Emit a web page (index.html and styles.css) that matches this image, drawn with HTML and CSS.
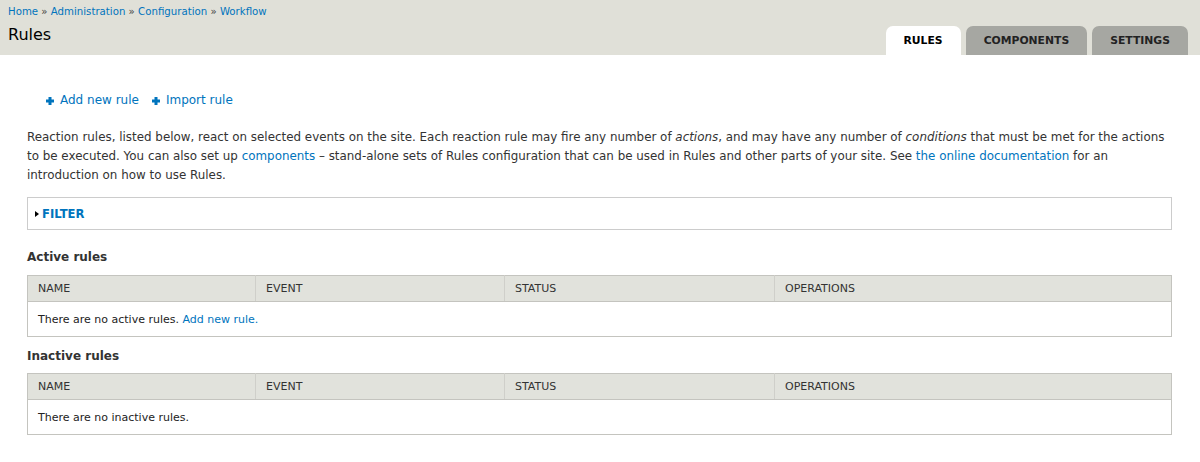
FILE: index.html
```html
<!DOCTYPE html>
<html>
<head>
    <title>Rules</title>
    <link rel="stylesheet" href="styles.css">
</head>
<body>
    <div class="header">
        <div class="header-left">
            <div class="breadcrumb">
                <a href="#">Home</a> &raquo; <a href="#">Administration</a> &raquo; <a href="#">Configuration</a> &raquo; <a href="#">Workflow</a>
            </div>
            <h1 class="page-title">Rules</h1>
        </div>
        <ul class="tabs">
            <li class="active"><a href="#">Rules</a></li>
            <li><a href="#">Components</a></li>
            <li><a href="#">Settings</a></li>
        </ul>
    </div>

    <div class="content">
        <ul class="action-links">
            <li>
                <svg class="plus" width="8" height="8" viewBox="0 0 8 8"><rect x="2.5" y="0" width="3" height="8" fill="#0074bd"/><rect x="0" y="2.5" width="8" height="3" fill="#0074bd"/></svg>
                <a href="#">Add new rule</a>
            </li>
            <li>
                <svg class="plus" width="8" height="8" viewBox="0 0 8 8"><rect x="2.5" y="0" width="3" height="8" fill="#0074bd"/><rect x="0" y="2.5" width="8" height="3" fill="#0074bd"/></svg>
                <a href="#">Import rule</a>
            </li>
        </ul>

        <p class="intro">Reaction rules, listed below, react on selected events on the site. Each reaction rule may fire any number of <em>actions</em>, and may have any number of <em>conditions</em> that must be met for the actions to be executed. You can also set up <a href="#">components</a> &ndash; stand-alone sets of Rules configuration that can be used in Rules and other parts of your site. See <a href="#">the online documentation</a> for an introduction on how to use Rules.</p>

        <div class="filter">
            <span class="arrow"></span>
            <a href="#">Filter</a>
        </div>

        <h2>Active rules</h2>
        <table class="rules-table">
            <thead>
                <tr>
                    <th class="col-name">Name</th>
                    <th class="col-event">Event</th>
                    <th class="col-status">Status</th>
                    <th class="col-ops">Operations</th>
                </tr>
            </thead>
            <tbody>
                <tr>
                    <td colspan="4">There are no active rules. <a href="#">Add new rule.</a></td>
                </tr>
            </tbody>
        </table>

        <h2 class="second">Inactive rules</h2>
        <table class="rules-table">
            <thead>
                <tr>
                    <th class="col-name">Name</th>
                    <th class="col-event">Event</th>
                    <th class="col-status">Status</th>
                    <th class="col-ops">Operations</th>
                </tr>
            </thead>
            <tbody>
                <tr>
                    <td colspan="4">There are no inactive rules.</td>
                </tr>
            </tbody>
        </table>
    </div>
</body>
</html>
```

FILE: styles.css
```css
body {
    margin: 0;
    background: #fff;
    color: #333;
    font-family: "DejaVu Sans", Verdana, sans-serif;
    font-size: 12px;
}

a {
    color: #0074bd;
    text-decoration: none;
}

/* header band */
.header {
    background: #e0e0d8;
    height: 55px;
    display: flex;
    justify-content: space-between;
    padding: 0 12px 0 8px;
}

.breadcrumb {
    font-size: 10.2px;
    line-height: 13px;
    padding-top: 5px;
    color: #444;
}

.page-title {
    margin: 7px 0 0;
    font-size: 16px;
    font-weight: normal;
    line-height: 20px;
    color: #000;
}

.tabs {
    list-style: none;
    margin: 0;
    padding: 0;
    display: flex;
    gap: 5px;
    align-self: flex-end;
}

.tabs a {
    display: block;
    height: 29px;
    line-height: 30px;
    padding: 0 18px;
    background: #a6a7a2;
    border-radius: 7px 7px 0 0;
    color: #222;
    font-size: 10.8px;
    font-weight: bold;
    text-transform: uppercase;
}

.tabs .active a {
    background: #fff;
    color: #000;
}

/* content */
.content {
    padding: 0 28px 0 27px;
}

.action-links {
    list-style: none;
    margin: 36px 0 18px;
    padding-left: 19px;
    display: flex;
    gap: 13px;
    line-height: 19px;
}

.action-links li {
    display: flex;
    align-items: center;
    gap: 6px;
}

.intro {
    margin: 0 0 12px;
    font-size: 11.9px;
    line-height: 19px;
}

.filter {
    border: 1px solid #ccc;
    height: 31px;
    display: flex;
    align-items: center;
    padding-left: 7px;
    gap: 3px;
}

.filter .arrow {
    width: 0;
    height: 0;
    border-top: 3px solid transparent;
    border-bottom: 3px solid transparent;
    border-left: 4px solid #000;
}

.filter a {
    font-size: 11.6px;
    font-weight: bold;
    text-transform: uppercase;
}

h2 {
    margin: 18px 0 8px;
    font-size: 12px;
    font-weight: bold;
    line-height: 19px;
}

h2.second {
    margin-top: 10px;
    margin-bottom: 7px;
}

.rules-table {
    width: 100%;
    border-collapse: collapse;
    border: 1px solid #c4c4bf;
    font-size: 11px;
}

.rules-table th {
    background: #e1e2dc;
    height: 25px;
    padding: 0 10px;
    text-align: left;
    font-weight: normal;
    text-transform: uppercase;
    color: #333;
    border-right: 1px solid #cfcfca;
    border-bottom: 1px solid #c4c4bf;
}

.rules-table th:last-child {
    border-right: none;
}

.rules-table td {
    height: 34px;
    padding: 0 10px;
    color: #222;
}

.col-name { width: 207px; }
.col-event { width: 228px; }
.col-status { width: 249px; }
```
